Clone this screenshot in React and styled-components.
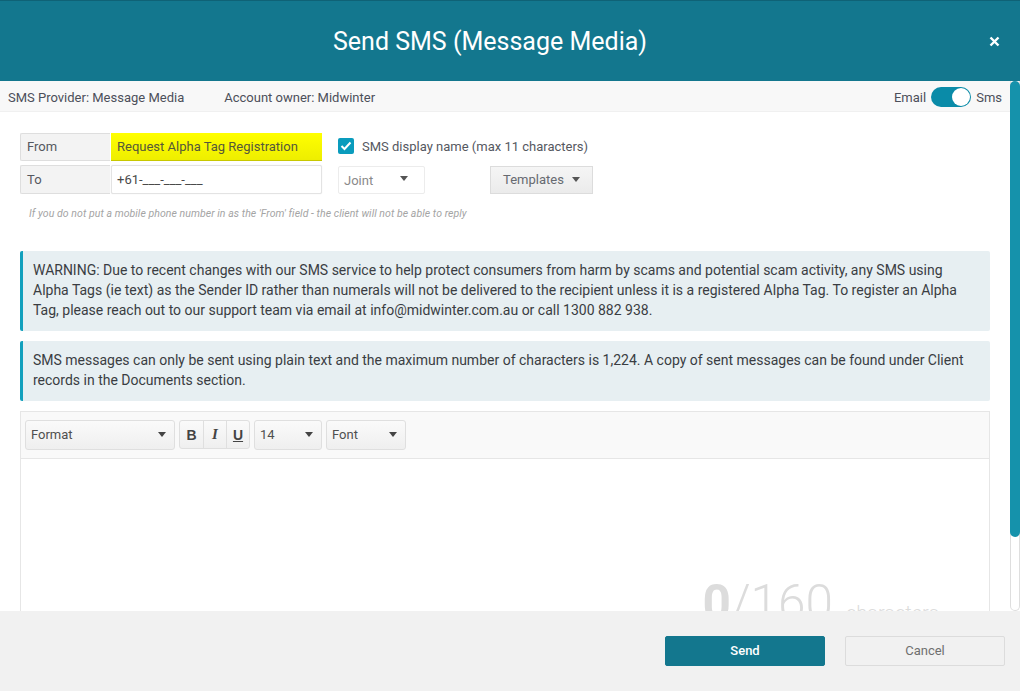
import React from 'react';
import styled, { createGlobalStyle } from 'styled-components';

const GlobalStyle = createGlobalStyle`
  html, body {
    margin: 0;
    padding: 0;
    background: #fff;
    font-family: Roboto, "Liberation Sans", sans-serif;
    color: #4a4a55;
  }
  * { box-sizing: border-box; }
`;

const Modal = styled.div`
  position: relative;
  width: 1020px;
  height: 691px;
  display: flex;
  flex-direction: column;
  overflow: hidden;
`;

const Header = styled.header`
  height: 81px;
  flex: none;
  display: flex;
  align-items: center;
  justify-content: center;
  position: relative;
  padding-right: 40px;
  background: #13778e;
  border-top: 1px solid #0f6276;
  color: #fff;
  font-size: 25px;
  font-weight: 400;
`;

const Close = styled.span`
  position: absolute;
  right: 20px;
  top: 35px;
  display: flex;
`;

const SubBar = styled.div`
  height: 31px;
  flex: none;
  display: flex;
  align-items: center;
  padding: 2px 18px 0 8px;
  background: #f8f8f8;
  border-bottom: 1px solid #f0f0f0;
  font-size: 13px;
  color: #4c4f5a;
`;

const Provider = styled.span`
  margin-right: 40px;
`;

const ToggleWrap = styled.div`
  margin-left: auto;
  display: flex;
  align-items: center;
  gap: 5px;
`;

const Toggle = styled.span`
  width: 40px;
  height: 20px;
  border-radius: 10px;
  background: #0a8ba8;
  display: flex;
  justify-content: flex-end;
  align-items: center;
  padding-right: 1px;

  &::after {
    content: '';
    width: 18px;
    height: 18px;
    border-radius: 50%;
    background: #fff;
  }
`;

const Content = styled.main`
  flex: 1;
  min-height: 0;
  overflow: hidden;
  padding: 21px 30px 0 20px;
`;

const FormGrid = styled.div`
  display: grid;
  grid-template-columns: 302px auto;
  column-gap: 16px;
  row-gap: 4px;
  justify-content: start;
`;

const Field = styled.div`
  display: flex;
  height: ${p => p.$h}px;
`;

const FieldLabel = styled.div`
  width: 90px;
  display: flex;
  align-items: center;
  padding: 0 0 1px 6px;
  background: #f3f3f3;
  border: 1px solid #dedede;
  border-right: none;
  border-radius: 2px 0 0 2px;
  font-size: 13px;
  color: #55585f;
`;

const Highlighted = styled.div`
  flex: 1;
  display: flex;
  align-items: center;
  margin-left: 1px;
  padding-left: 6px;
  background: linear-gradient(#ffff00, #eeee00);
  border-bottom: 1px solid #c8c800;
  font-size: 13px;
  color: #55583a;
`;

const PhoneInput = styled.div`
  flex: 1;
  display: flex;
  align-items: center;
  margin-left: 1px;
  padding-left: 5px;
  background: #fff;
  border: 1px solid #e3e3e3;
  border-radius: 2px;
  box-shadow: 0 0 1px rgba(0, 0, 0, 0.15);
  font-size: 13px;
  color: #4a4a4a;
`;

const CheckRow = styled.label`
  display: flex;
  align-items: center;
  align-self: start;
  gap: 8px;
  font-size: 13px;
  color: #55585f;
  height: 26px;
`;

const CheckBox = styled.span`
  width: 16px;
  height: 16px;
  border-radius: 2px;
  background: #0a9cbd;
  display: flex;
  align-items: center;
  justify-content: center;
`;

const ControlRow = styled.div`
  display: flex;
  align-items: center;
  gap: 65px;
`;

const JointSelect = styled.div`
  width: 87px;
  height: 28px;
  margin-top: 1px;
  display: flex;
  align-items: center;
  padding-left: 5px;
  gap: 27px;
  border: 1px solid #ececec;
  border-radius: 2px;
  font-size: 13px;
  color: #8a8a8a;
`;

const Caret = styled.span`
  width: 0;
  height: 0;
  flex: none;
  margin-bottom: ${p => p.$raise || 0}px;
  border-left: 4.5px solid transparent;
  border-right: 4.5px solid transparent;
  border-top: 5.5px solid ${p => p.$color || '#555'};
`;

const TemplatesButton = styled.div`
  width: 103px;
  height: 28px;
  display: flex;
  align-items: center;
  justify-content: center;
  gap: 8px;
  background: linear-gradient(#f5f5f5, #ebebeb);
  border: 1px solid #dcdcdc;
  font-size: 13px;
  color: #666a70;
`;

const Hint = styled.p`
  margin: 13px 0 0 9px;
  font-size: 10.5px;
  font-style: italic;
  letter-spacing: 0.06px;
  color: #a4a4a4;
`;

const Notice = styled.div`
  margin-top: ${p => p.$mt}px;
  padding: 9px 13px 11px 10px;
  background: #e7eff2;
  border-left: 3px solid #12a0bd;
  border-radius: 2px;
  font-size: 14px;
  line-height: 20px;
  color: #3a3d42;
`;

const Editor = styled.section`
  margin-top: 10px;
  height: 300px;
  border: 1px solid #e6e6e6;
  position: relative;
`;

const EditorBar = styled.div`
  height: 47px;
  display: flex;
  align-items: center;
  gap: 4px;
  padding: 0 4px 1px;
  background: #f9f9f9;
  border-bottom: 1px solid #e6e6e6;
`;

const DropButton = styled.div`
  width: ${p => p.$w}px;
  height: 30px;
  display: flex;
  align-items: center;
  justify-content: space-between;
  padding: 0 8px 0 5px;
  background: linear-gradient(#fafafa, #efefef);
  border: 1px solid #dfdfdf;
  border-radius: 3px;
  font-size: 13px;
  color: #4f4f4f;
`;

const ButtonGroup = styled.div`
  display: flex;
  height: 29px;
  border: 1px solid #dfdfdf;
  border-radius: 3px;
  overflow: hidden;
  background: linear-gradient(#fafafa, #efefef);
`;

const GroupButton = styled.span`
  width: 23px;
  display: flex;
  align-items: center;
  justify-content: center;
  font-family: ${p => (p.$italic ? '"Liberation Serif", serif' : '"Liberation Sans", sans-serif')};
  font-size: ${p => (p.$italic ? 15 : 14)}px;
  font-weight: 700;
  font-style: ${p => (p.$italic ? 'italic' : 'normal')};
  text-decoration: ${p => (p.$under ? 'underline' : 'none')};
  color: #444;

  & + & {
    border-left: 1px solid #dfdfdf;
  }
`;

const Counter = styled.div`
  position: absolute;
  top: 158px;
  right: 50px;
  display: flex;
  align-items: baseline;
  color: #dcdcdc;
  font-size: 49.5px;
  line-height: 66px;
  font-weight: 300;
`;

const CounterValue = styled.b`
  font-weight: 700;
`;

const CounterUnit = styled.small`
  margin-left: 13px;
  font-size: 20px;
  font-weight: 300;
`;

const Footer = styled.footer`
  height: 80px;
  flex: none;
  display: flex;
  justify-content: flex-end;
  gap: 20px;
  padding: 25px 15px 0 0;
  background: #f1f1f1;
  position: relative;
`;

const FooterButton = styled.button`
  width: 160px;
  height: 30px;
  padding: 0 0 2px;
  border-radius: 2px;
  font-family: inherit;
  font-size: 13px;
  font-weight: ${p => (p.$primary ? 500 : 400)};
  background: ${p => (p.$primary ? '#13778e' : 'transparent')};
  border: 1px solid ${p => (p.$primary ? '#13778e' : '#dcdcdc')};
  color: ${p => (p.$primary ? '#fff' : '#6f6f6f')};
`;

const ScrollTrack = styled.div`
  position: absolute;
  top: 81px;
  right: 0;
  width: 10px;
  height: 530px;
  border: 1px solid #dedede;
  border-top: none;
  border-radius: 0 0 5px 5px;
`;

const ScrollThumb = styled.div`
  position: absolute;
  top: 0;
  left: -1px;
  width: 10px;
  height: 456px;
  background: #1592ab;
  border-radius: 5px;
`;

export default function App() {
  return (
    <Modal>
      <GlobalStyle />
      <Header>
        Send SMS (Message Media)
        <Close>
          <svg width="11" height="11" viewBox="0 0 11 11">
            <path d="M1.5 1.5l8 8M9.5 1.5l-8 8" stroke="#fff" strokeWidth="2.4" />
          </svg>
        </Close>
      </Header>
      <SubBar>
        <Provider>SMS Provider: Message Media</Provider>
        <span>Account owner: Midwinter</span>
        <ToggleWrap>
          <span>Email</span>
          <Toggle />
          <span>Sms</span>
        </ToggleWrap>
      </SubBar>
      <Content>
        <FormGrid>
          <Field $h={28}>
            <FieldLabel>From</FieldLabel>
            <Highlighted>Request Alpha Tag Registration</Highlighted>
          </Field>
          <CheckRow>
            <CheckBox>
              <svg width="12" height="10" viewBox="0 0 12 10">
                <path d="M1.5 5l3 3 6-6.5" fill="none" stroke="#fff" strokeWidth="2" />
              </svg>
            </CheckBox>
            SMS display name (max 11 characters)
          </CheckRow>
          <Field $h={29}>
            <FieldLabel>To</FieldLabel>
            <PhoneInput>+61-___-___-___</PhoneInput>
          </Field>
          <ControlRow>
            <JointSelect>
              Joint
              <Caret $raise={4} />
            </JointSelect>
            <TemplatesButton>
              Templates
              <Caret />
            </TemplatesButton>
          </ControlRow>
        </FormGrid>
        <Hint>If you do not put a mobile phone number in as the 'From' field - the client will not be able to reply</Hint>
        <Notice $mt={31}>
          WARNING: Due to recent changes with our SMS service to help protect consumers from harm by scams and potential scam activity, any SMS using Alpha Tags (ie text) as the Sender ID rather than numerals will not be delivered to the recipient unless it is a registered Alpha Tag. To register an Alpha Tag, please reach out to our support team via email at info@midwinter.com.au or call 1300 882 938.
        </Notice>
        <Notice $mt={10}>
          SMS messages can only be sent using plain text and the maximum number of characters is 1,224. A copy of sent messages can be found under Client records in the Documents section.
        </Notice>
        <Editor>
          <EditorBar>
            <DropButton $w={150}>
              Format
              <Caret $color="#444" />
            </DropButton>
            <ButtonGroup>
              <GroupButton>B</GroupButton>
              <GroupButton $italic>I</GroupButton>
              <GroupButton $under>U</GroupButton>
            </ButtonGroup>
            <DropButton $w={68}>
              14
              <Caret $color="#444" />
            </DropButton>
            <DropButton $w={80}>
              Font
              <Caret $color="#444" />
            </DropButton>
          </EditorBar>
          <Counter>
            <CounterValue>0</CounterValue>/160
            <CounterUnit>characters</CounterUnit>
          </Counter>
        </Editor>
      </Content>
      <Footer>
        <FooterButton $primary>Send</FooterButton>
        <FooterButton>Cancel</FooterButton>
      </Footer>
      <ScrollTrack>
        <ScrollThumb />
      </ScrollTrack>
    </Modal>
  );
}
